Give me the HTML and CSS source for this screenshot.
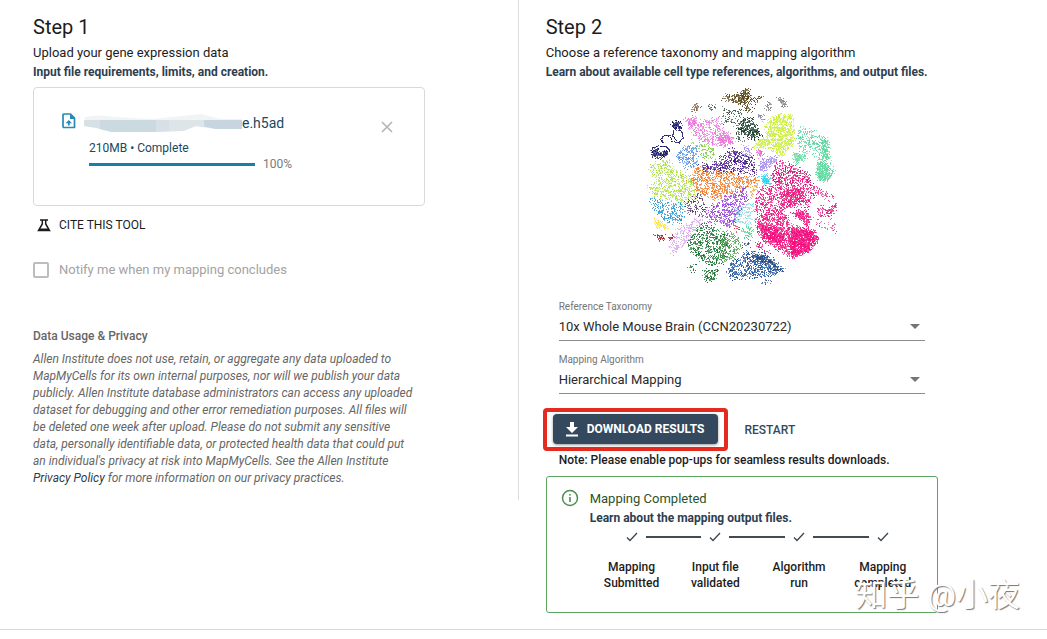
FILE: index.html
```html
<!DOCTYPE html>
<html lang="en">
<head>
  <meta charset="UTF-8" />
  <meta name="viewport" content="width=device-width, initial-scale=1.0"/>
  <title>MapMyCells</title>
  <link rel="stylesheet" href="styles.css">
</head>
<body>

<main class="steps">
  <section class="step step-one">
    <div class="content">
      <h2>Step 1</h2>
      <p class="subtitle">Upload your gene expression data</p>
      <a class="help-link" href="#">Input file requirements, limits, and creation.</a>

      <div class="upload-box">
        <svg class="file-icon" width="14" height="16" viewBox="0 0 14 16">
          <path d="M2.500 1H8.500L12.500 5V14.500H2Q1 14.500 1 13.500V2Q1 1 2.500 1Z" fill="none" stroke="#2789b5" stroke-width="1.700" stroke-linejoin="round"/>
          <path d="M8 1L13 6H8Z" fill="#2789b5"/>
          <path d="M6.800 7L10 10.300H7.700V12.500H5.900V10.300H3.600Z" fill="#2789b5"/>
        </svg>
        <div class="file-info">
          <div class="file-name">
            <svg class="mask" width="158" height="19" viewBox="0 0 158 19">
              <path d="M1 3Q14 0 30 3L68 5L98 2L117 0L137 5H158V7H0Z" fill="#f1f4f5"/>
              <path d="M0 6H158V15H132L112 12L99 17L72 18H28L12 14L0 12Z" fill="#d6e0e5"/>
              <path d="M16 6H72V18H28L16 15Z" fill="#cbd9e1"/>
              <path d="M120 6H158V15H132L120 12Z" fill="#c6d5de"/>
              <path d="M85 6H120V12L112 12L99 17H85Z" fill="#dde5e9"/>
            </svg>
            <span>e.h5ad</span>
          </div>
          <div class="file-status">210MB • Complete</div>
          <div class="progress-row">
            <div class="progress"><div class="bar" style="width: 100%"></div></div>
            <span>100%</span>
          </div>
        </div>
        <button class="remove" type="button" aria-label="Remove file">
          <svg width="12" height="12" viewBox="0 0 12 12"><path d="M1 1L11 11M11 1L1 11" stroke="#b4b4b4" stroke-width="1.600"/></svg>
        </button>
      </div>

      <button class="cite" type="button">
        <svg width="14" height="14" viewBox="0 0 14 14">
          <path d="M3 2H11M5.300 2V6L1.500 12.500H12.500L8.700 6V2" fill="none" stroke="#1c1c1c" stroke-width="1.500"/>
          <path d="M3 10.500H11L12.500 13H1.500Z" fill="#1c1c1c"/>
        </svg>
        CITE THIS TOOL
      </button>

      <label class="notify" for="notify">
        <input type="checkbox" id="notify" disabled />
        Notify me when my mapping concludes
      </label>

      <h3>Data Usage &amp; Privacy</h3>
      <p class="privacy">Allen Institute does not use, retain, or aggregate any data uploaded to MapMyCells for its own internal purposes, nor will we publish your data publicly. Allen Institute database administrators can access any uploaded dataset for debugging and other error remediation purposes. All files will be deleted one week after upload. Please do not submit any sensitive data, personally identifiable data, or protected health data that could put an individual's privacy at risk into MapMyCells. See the Allen Institute <a href="#">Privacy Policy</a> for more information on our privacy practices.</p>
    </div>
  </section>

  <section class="step step-two">
    <div class="content">
      <h2>Step 2</h2>
      <p class="subtitle">Choose a reference taxonomy and mapping algorithm</p>
      <a class="help-link" href="#">Learn about available cell type references, algorithms, and output files.</a>

      <canvas id="umap" class="umap" width="204" height="205"></canvas>

      <div class="fields">
        <div class="field">
          <label for="taxonomy">Reference Taxonomy</label>
          <div class="select">
            <select id="taxonomy"><option>10x Whole Mouse Brain (CCN20230722)</option></select>
          </div>
        </div>
        <div class="field">
          <label for="algorithm">Mapping Algorithm</label>
          <div class="select">
            <select id="algorithm"><option>Hierarchical Mapping</option></select>
          </div>
        </div>
      </div>

      <div class="actions">
        <div class="highlight">
          <button class="download" type="button">
            <svg width="14" height="16" viewBox="0 0 14 16"><path d="M5 1H9V6H13L7 12L1 6H5ZM1 13.500H13V15.500H1Z" fill="#fff"/></svg>
            DOWNLOAD RESULTS
          </button>
        </div>
        <button class="restart" type="button">RESTART</button>
      </div>
      <p class="note">Note: Please enable pop-ups for seamless results downloads.</p>

      <div class="alert">
        <svg class="info-icon" width="18" height="18" viewBox="0 0 18 18">
          <circle cx="9" cy="9" r="7.500" fill="none" stroke="#4b8f50" stroke-width="1.500"/>
          <path d="M8.200 5H9.800V6.600H8.200ZM8.200 8H9.800V13H8.200Z" fill="#4b8f50"/>
        </svg>
        <div class="alert-body">
          <div class="alert-title">Mapping Completed</div>
          <a class="help-link" href="#">Learn about the mapping output files.</a>
          <ol class="stepper">
            <li><svg width="12" height="10" viewBox="0 0 12 10"><path d="M1 5.500L4 8.500L11 1"/></svg>Mapping<br>Submitted</li>
            <li><svg width="12" height="10" viewBox="0 0 12 10"><path d="M1 5.500L4 8.500L11 1"/></svg>Input file<br>validated</li>
            <li><svg width="12" height="10" viewBox="0 0 12 10"><path d="M1 5.500L4 8.500L11 1"/></svg>Algorithm<br>run</li>
            <li><svg width="12" height="10" viewBox="0 0 12 10"><path d="M1 5.500L4 8.500L11 1"/></svg>Mapping<br>completed</li>
          </ol>
        </div>
      </div>
    </div>
  </section>
</main>

<footer></footer>
<div class="watermark">知乎 @小夜</div>

<script src="umap.js"></script>
</body>
</html>
```
FILE: styles.css
```css
* {
  box-sizing: border-box;
}

body {
  margin: 0;
  font-family: Roboto, "Noto Sans CJK SC", sans-serif;
  font-size: 13px;
  color: #1c1c1c;
  background: #fff;
  position: relative;
}

h2, h3, p, ol {
  margin: 0;
  padding: 0;
}

button {
  font: inherit;
  border: none;
  background: none;
  padding: 0;
  cursor: pointer;
}

a {
  color: #2c3e50;
  text-decoration: none;
}

svg, canvas {
  display: block;
  flex: none;
}

.steps {
  display: grid;
  grid-template-columns: 54fr 55fr;
  align-items: start;
}

.step {
  padding: 15px 27px 16px;
}

.step-one {
  padding-left: 33px;
  padding-bottom: 13px;
  border-right: 1px solid #dcdcdc;
}

.content {
  max-width: 392px;
}

h2 {
  font-size: 20px;
  line-height: 24px;
  font-weight: 400;
}

.subtitle {
  margin-top: 4px;
  font-size: 13px;
  line-height: 20px;
}

.help-link {
  display: block;
  font-size: 12px;
  line-height: 18px;
  font-weight: 700;
}

/* upload */
.upload-box {
  display: flex;
  margin-top: 6px;
  height: 119px;
  padding: 25px 31px 0 28px;
  border: 1px solid #d9d9d9;
  border-radius: 4px;
}

.file-info {
  flex: 1;
  margin-left: 13px;
}

.file-name {
  display: flex;
  align-items: center;
  margin-left: -5px;
  height: 20px;
  font-size: 14px;
  color: #17495f;
}

.file-status {
  margin-top: 6px;
  font-size: 12px;
  line-height: 18px;
  color: #17495f;
}

.progress-row {
  display: flex;
  align-items: center;
  gap: 8px;
  font-size: 12px;
  line-height: 14px;
  color: #7a7a7a;
}

.progress {
  width: 166px;
  height: 3px;
}

.bar {
  height: 100%;
  background: #1a7ea8;
}

.remove {
  align-self: flex-start;
  margin-top: 8px;
}

.cite {
  display: flex;
  align-items: center;
  gap: 8px;
  margin: 10px 0 0 4px;
  font-size: 12px;
  line-height: 18px;
  color: #1c1c1c;
}

.notify {
  display: flex;
  align-items: center;
  gap: 10px;
  margin-top: 26px;
  line-height: 20px;
  color: #a3a3a3;
}

.notify input {
  appearance: none;
  width: 16px;
  height: 16px;
  margin: 0;
  border: 2px solid #bdbdbd;
  border-radius: 2px;
}

h3 {
  margin-top: 47px;
  font-size: 12px;
  line-height: 18px;
  font-weight: 500;
  color: #666;
}

.privacy {
  margin-top: 6px;
  padding-right: 8px;
  font-size: 12px;
  line-height: 17px;
  font-style: italic;
  color: #666;
}

/* reference + algorithm */
.umap {
  margin: 4px auto 0;
}

.fields {
  display: grid;
  gap: 13px;
  margin-top: 11px;
  padding: 0 13px;
}

.field label {
  display: block;
  font-size: 10px;
  line-height: 12px;
  color: #757575;
}

.select {
  display: grid;
  align-items: center;
  border-bottom: 1px solid #8c8c8c;
}

.select select {
  grid-area: 1 / 1;
  appearance: none;
  width: 100%;
  height: 27px;
  padding: 0;
  border: none;
  background: none;
  font: inherit;
  color: #2a2a2a;
}

.select::after {
  content: "";
  grid-area: 1 / 1;
  justify-self: end;
  margin-right: 5px;
  border: 5px solid transparent;
  border-top-color: #757575;
  border-bottom: none;
  pointer-events: none;
}

.actions {
  display: flex;
  align-items: center;
  gap: 16px;
  margin: 14px 0 0 -3px;
}

.highlight {
  padding: 2px 6px 3px;
  border: 4px solid #e52a20;
  border-radius: 4px;
}

.download {
  display: flex;
  align-items: center;
  gap: 8px;
  height: 30px;
  padding: 0 14px 0 12px;
  border-radius: 4px;
  background: #34495e;
  color: #fff;
  font-size: 12px;
  font-weight: 700;
  box-shadow: 0 1px 3px rgba(0,0,0,0.4);
}

.restart {
  font-size: 12px;
  font-weight: 500;
  color: #34495e;
}

.note {
  padding-left: 13px;
  font-size: 12px;
  line-height: 18px;
  font-weight: 500;
}

.alert {
  display: flex;
  gap: 11px;
  margin-top: 7px;
  padding: 12px 12px 21px 14px;
  border: 1px solid #5ba361;
  border-radius: 3px;
}

.alert-body {
  flex: 1;
}

.alert-title {
  line-height: 20px;
  color: #2a532d;
}

.stepper {
  display: grid;
  grid-template-columns: repeat(4, 1fr);
  margin-top: 5px;
  list-style: none;
  font-size: 12px;
  line-height: 16px;
  font-weight: 500;
  text-align: center;
}

.stepper li {
  position: relative;
}

.stepper svg {
  margin: 0 auto 17px;
  fill: none;
  stroke: #3a464f;
  stroke-width: 1.3;
}

/* connector between two check marks */
.stepper li + li::before {
  content: "";
  position: absolute;
  top: 4px;
  right: calc(50% + 14px);
  width: calc(100% - 28px);
  height: 2px;
  background: #3f4c57;
}

footer {
  border-top: 1px solid #d9d9d9;
}

.watermark {
  position: absolute;
  right: 27px;
  bottom: 11px;
  font-size: 32px;
  line-height: 48px;
  color: #fff;
  text-shadow: 1px 1px 1px #777;
}
```
FILE: umap.js
```javascript
// clusters: color, density, outline as x,y pairs
const clusters = [
  ["#a6e034", 0.42, [10,80, 28,75, 35,85, 50,90, 58,113, 42,118, 15,112, 7,103, 18,95, 10,88]],
  ["#7cc83c", 0.42, [48,55, 75,63, 75,75, 63,75, 60,65]],
  ["#ec70dc", 0.44, [45,34, 55,31, 59,37, 80,31, 83,44, 95,57, 92,62, 75,61, 60,56, 50,46]],
  ["#ee70dc", 0.85, [46,35, 54,32, 57,38, 50,43]],
  ["#ee70dc", 0.7, [78,50, 87,47, 95,57, 85,62, 77,57]],
  ["#4a8ce4", 0.5, [45,60, 58,63, 57,83, 45,83, 35,71]],
  ["#3c108c", 0.5, [58,78, 72,80, 92,63, 112,72, 118,90, 95,88, 65,87]],
  ["#f07420", 0.5, [48,95, 57,82, 82,87, 118,93, 118,99, 102,105, 75,115, 60,108]],
  ["#503060", 0.3, [45,117, 60,107, 65,117, 65,133, 48,128]],
  ["#2090cc", 0.42, [10,113, 22,117, 43,118, 45,137, 28,138, 12,123]],
  ["#dca0f0", 0.45, [38,143, 62,130, 62,143, 45,160, 32,170, 28,160]],
  ["#9434dc", 0.48, [67,123, 105,102, 108,115, 92,143, 68,137]],
  ["#88d8e0", 0.42, [95,125, 112,117, 118,127, 110,142, 95,137]],
  ["#44d084", 0.6, [102,143, 113,142, 112,152, 105,153]],
  ["#107028", 0.46, [50,153, 62,137, 75,143, 85,147, 90,165, 86,177, 75,182, 48,168]],
  ["#4c9c50", 0.4, [80,145, 95,148, 102,160, 95,173, 80,177]],
  ["#107028", 0.6, [63,185, 78,185, 75,195, 65,197]],
  ["#107028", 0.5, [48,180, 55,181, 55,187, 50,188]],
  ["#184c9c", 0.5, [87,182, 105,167, 128,168, 145,185, 135,190, 115,192, 92,195, 87,188]],
  ["#284880", 0.7, [103,167, 125,171, 143,186, 135,185, 118,175]],
  ["#304078", 0.5, [100,160, 110,155, 112,163]],
  ["#284880", 0.6, [122,197, 132,195, 131,198, 122,200]],
  ["#54400e", 0.9, [82,10, 95,11, 108,3, 110,12, 103,20, 95,18, 82,15]],
  ["#54400e", 0.3, [100,8, 115,12, 113,28, 103,26]],
  ["#54400e", 0.6, [115,15, 123,10, 121,15, 116,17]],
  ["#806048", 0.8, [52,25, 55,18, 61,20, 57,27]],
  ["#3c5c4a", 0.45, [67,23, 70,17, 76,22, 73,27]],
  ["#2c4c3a", 0.3, [82,23, 102,25, 103,40, 103,58, 97,57, 95,40, 83,38]],
  ["#0c3420", 0.75, [102,33, 113,33, 122,52, 110,55, 99,45]],
  ["#808080", 0.95, [136,14, 142,13, 149,21, 145,22]],
  ["#808080", 0.65, [128,17, 132,17, 130,22, 131,27, 125,26]],
  ["#8080a0", 0.4, [117,30, 124,29, 123,36, 118,35]],
  ["#c8ee30", 0.7, [125,37, 138,29, 153,30, 154,58, 142,72, 128,63, 113,62, 115,56, 127,52]],
  ["#54d49c", 0.38, [158,42, 167,43, 187,52, 190,65, 187,72, 197,88, 185,98, 177,93, 178,80, 170,63, 165,73, 157,60]],
  ["#5cd89c", 0.92, [178,78, 187,78, 192,93, 183,97, 176,93]],
  ["#5cd89c", 0.75, [152,70, 158,66, 167,75, 155,78]],
  ["#5cd89c", 0.65, [183,55, 189,55, 190,77, 183,73]],
  ["#a088e8", 0.5, [102,60, 110,60, 112,72, 103,68]],
  ["#a088e8", 0.8, [117,87, 123,73, 140,71, 133,79, 127,85]],
  ["#e858d0", 0.85, [116,68, 119,65, 124,68, 120,73]],
  ["#14d0ec", 0.92, [119,93, 126,89, 132,93, 130,99, 122,100]],
  ["#f0a030", 0.6, [110,113, 112,100, 121,97, 116,106, 113,115]],
  ["#ec1080", 0.45, [132,93, 135,78, 145,75, 168,88, 177,107, 168,123, 148,123, 128,133, 115,127, 118,103, 135,100]],
  ["#902058", 0.12, [132,93, 135,78, 145,75, 168,88, 177,107, 160,105, 135,100]],
  ["#f0107c", 0.75, [145,103, 162,105, 165,115, 148,122, 143,112]],
  ["#e03080", 0.5, [172,100, 180,105, 195,112, 190,115, 175,108]],
  ["#e01478", 0.6, [177,122, 182,119, 184,133, 179,131]],
  ["#e01478", 0.6, [183,127, 192,120, 199,120, 190,134]],
  ["#d84488", 0.22, [175,135, 195,138, 196,148, 180,142]],
  ["#f0107c", 0.62, [115,143, 117,133, 128,128, 142,123, 152,140, 175,147, 177,160, 152,173, 122,155]],
  ["#f4087c", 1.3, [150,127, 165,125, 172,133, 168,143, 158,133]],
  ["#f4087c", 1.3, [152,143, 175,145, 178,155, 168,168, 152,172, 148,157]],
  ["#f4087c", 0.9, [120,142, 128,140, 147,150, 142,160, 122,155]],
  ["#e01478", 0.7, [115,155, 128,165, 130,168, 117,162]],
  ["#f8e030", 0.8, [15,133, 28,142, 25,145, 17,142]],
  ["#a81020", 1.2, [18,151, 25,151, 25,155, 19,155]],
  ["#a81020", 1.2, [29,152, 36,149, 33,154, 29,155]],
  ["#d83040", 1, [95,142, 99,143, 100,147, 97,146]],
  ["#0c0c5c", 1.3, [32,38, 36,36, 41,36, 41,45, 34,45]],
  ["#0c0c5c", 1.3, [12,65, 17,63, 21,68, 29,65, 28,70, 20,74, 12,72]],
];

// thin trails: color, points as x,y pairs
const trails = [
  ["#0c0c5c", [41,45, 42,52, 38,57, 31,55, 29,50, 23,49, 20,54, 22,57]],
  ["#0c0c5c", [33,45, 32,50, 36,55]],
  ["#0c0c5c", [11,68, 12,61, 20,60, 26,61, 29,65]],
  ["#605040", [13,149, 19,151]],
];

let seed = 7;
function random() {
  seed = (seed * 16807) % 2147483647;
  return (seed - 1) / 2147483646;
}

// coarse noise so the points bunch together
const noise = Array.from({ length: 110 * 110 }, () => 0.45 + 1.1 * random());

function inside(x, y, pts) {
  let hit = false;
  for (let i = 0, j = pts.length - 2; i < pts.length; j = i, i += 2) {
    const crosses = (pts[i + 1] > y) !== (pts[j + 1] > y);
    if (crosses && x < (pts[j] - pts[i]) * (y - pts[i + 1]) / (pts[j + 1] - pts[i + 1]) + pts[i]) hit = !hit;
  }
  return hit;
}

const ctx = document.getElementById("umap").getContext("2d");

clusters.forEach(([color, density, pts]) => {
  ctx.fillStyle = color;
  for (let y = 0; y < 205; y++) {
    for (let x = 0; x < 204; x++) {
      const jx = x + 0.5 + (random() - 0.5) * 4;
      const jy = y + 0.5 + (random() - 0.5) * 4;
      if (!inside(jx, jy, pts)) continue;
      if (random() > density * noise[(y >> 1) * 110 + (x >> 1)]) continue;
      ctx.globalAlpha = 0.55 + 0.45 * random();
      ctx.fillRect(x, y, 1, 1);
    }
  }
});

trails.forEach(([color, pts]) => {
  ctx.fillStyle = color;
  ctx.globalAlpha = 0.8;
  for (let i = 0; i < pts.length - 2; i += 2) {
    for (let t = 0; t < 1; t += 0.12) {
      const x = pts[i] + (pts[i + 2] - pts[i]) * t + random();
      const y = pts[i + 1] + (pts[i + 3] - pts[i + 1]) * t + random();
      ctx.fillRect(Math.round(x), Math.round(y), 1, 1);
    }
  }
});
```
